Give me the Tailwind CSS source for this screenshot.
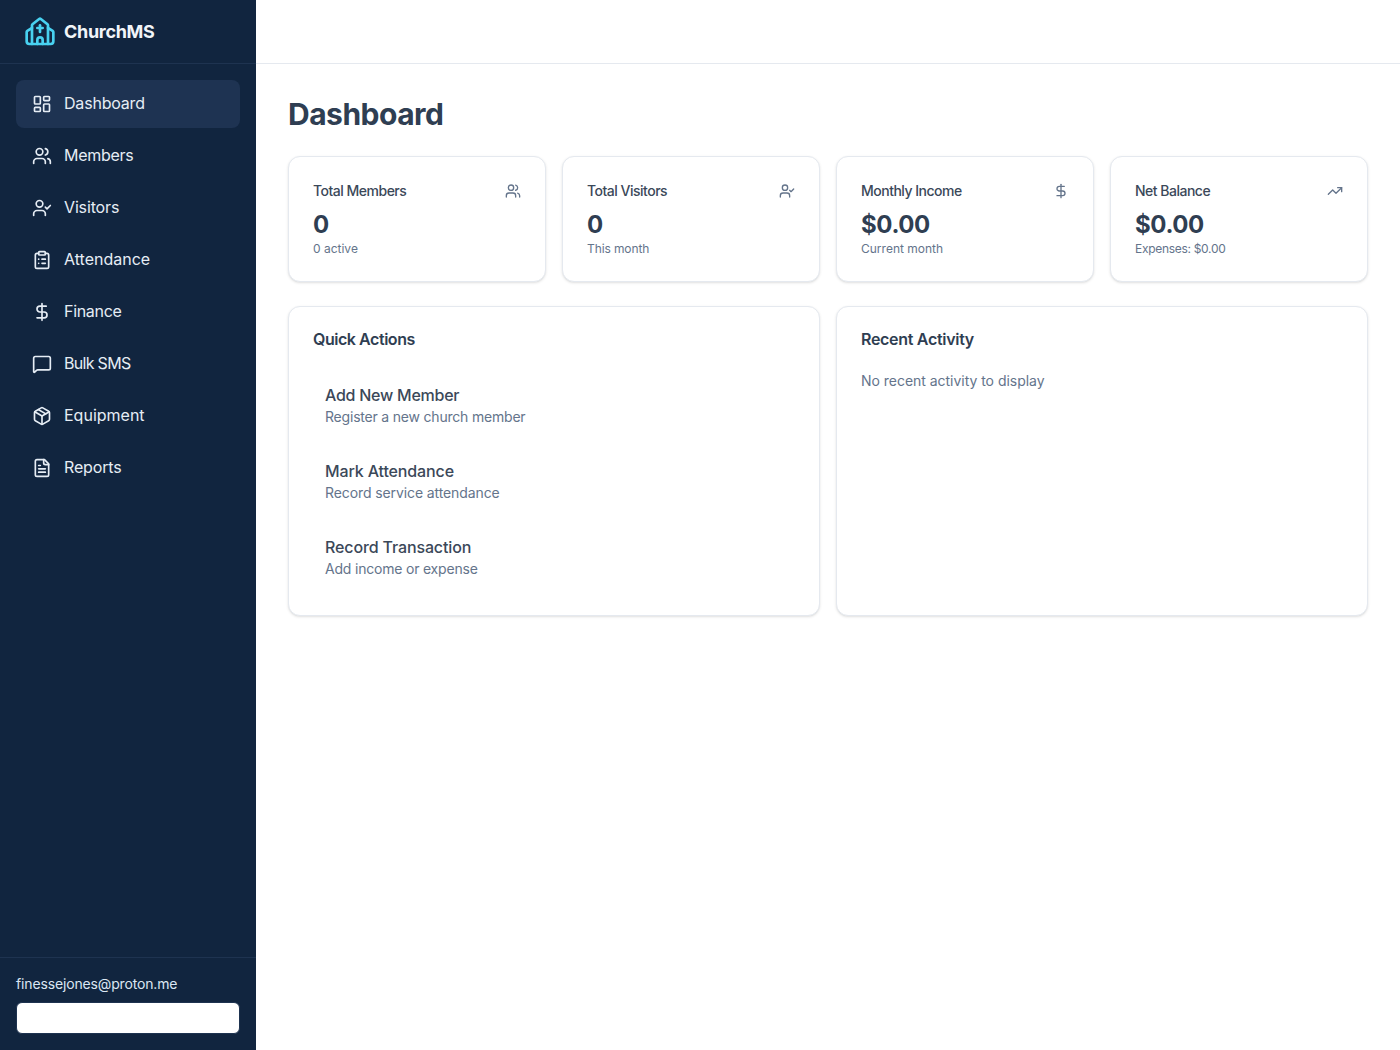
<!DOCTYPE html>
<html lang="en">
<head>
    <meta charset="UTF-8">
    <meta name="viewport" content="width=device-width, initial-scale=1.0">
    <title>ChurchMS Dashboard</title>
    <script src="https://cdn.jsdelivr.net/npm/@tailwindcss/browser@4"></script>
</head>
<body class="bg-white font-['Inter',sans-serif]">
    <div class="flex h-[1050px] overflow-hidden">

        <!-- Sidebar -->
        <aside class="w-64 shrink-0 bg-[#11253f] flex flex-col">
            <div class="h-16 flex items-center gap-2 px-6 border-b border-[#1e3350]">
                <svg class="w-8 h-8 text-[#48d1f0]" viewBox="0 0 24 24" fill="none" stroke="currentColor" stroke-width="2" stroke-linecap="round" stroke-linejoin="round"><path d="M10 9h4"/><path d="M12 7v5"/><path d="M14 21v-3a2 2 0 0 0-4 0v3"/><path d="m18 9 3.52 2.147a1 1 0 0 1 .48.854V19a2 2 0 0 1-2 2H4a2 2 0 0 1-2-2v-6.999a1 1 0 0 1 .48-.854L6 9"/><path d="M6 21V7a1 1 0 0 1 .376-.782l5-3.999a1 1 0 0 1 1.249.001l5 4A1 1 0 0 1 18 7v14"/></svg>
                <span class="text-[18px] font-bold text-[#f1f5f9] tracking-[-0.3px]">ChurchMS</span>
            </div>

            <nav class="flex-1 p-4 flex flex-col gap-1">
                <a class="h-12 flex items-center gap-3 px-4 rounded-lg bg-[#1e3352] text-[#e6edf5] text-[16px]">
                    <svg class="w-5 h-5" viewBox="0 0 24 24" fill="none" stroke="currentColor" stroke-width="2" stroke-linecap="round" stroke-linejoin="round"><rect width="7" height="9" x="3" y="3" rx="1"/><rect width="7" height="5" x="14" y="3" rx="1"/><rect width="7" height="9" x="14" y="12" rx="1"/><rect width="7" height="5" x="3" y="16" rx="1"/></svg>
                    <span class="pb-[2px] tracking-[-0.2px]">Dashboard</span>
                </a>
                <a class="h-12 flex items-center gap-3 px-4 rounded-lg text-[#e6edf5] text-[16px]">
                    <svg class="w-5 h-5" viewBox="0 0 24 24" fill="none" stroke="currentColor" stroke-width="2" stroke-linecap="round" stroke-linejoin="round"><path d="M16 21v-2a4 4 0 0 0-4-4H6a4 4 0 0 0-4 4v2"/><circle cx="9" cy="7" r="4"/><path d="M22 21v-2a4 4 0 0 0-3-3.87"/><path d="M16 3.13a4 4 0 0 1 0 7.75"/></svg>
                    <span class="pb-[2px] tracking-[-0.3px]">Members</span>
                </a>
                <a class="h-12 flex items-center gap-3 px-4 rounded-lg text-[#e6edf5] text-[16px]">
                    <svg class="w-5 h-5" viewBox="0 0 24 24" fill="none" stroke="currentColor" stroke-width="2" stroke-linecap="round" stroke-linejoin="round"><path d="M16 21v-2a4 4 0 0 0-4-4H6a4 4 0 0 0-4 4v2"/><circle cx="9" cy="7" r="4"/><polyline points="16 11 18 13 22 9"/></svg>
                    <span class="pb-[2px] tracking-[-0.15px]">Visitors</span>
                </a>
                <a class="h-12 flex items-center gap-3 px-4 rounded-lg text-[#e6edf5] text-[16px]">
                    <svg class="w-5 h-5" viewBox="0 0 24 24" fill="none" stroke="currentColor" stroke-width="2" stroke-linecap="round" stroke-linejoin="round"><rect width="8" height="4" x="8" y="2" rx="1"/><path d="M16 4h2a2 2 0 0 1 2 2v14a2 2 0 0 1-2 2H6a2 2 0 0 1-2-2V6a2 2 0 0 1 2-2h2"/><path d="M12 11h4"/><path d="M12 16h4"/><path d="M8 11h.01"/><path d="M8 16h.01"/></svg>
                    <span class="pb-[2px]">Attendance</span>
                </a>
                <a class="h-12 flex items-center gap-3 px-4 rounded-lg text-[#e6edf5] text-[16px]">
                    <svg class="w-5 h-5" viewBox="0 0 24 24" fill="none" stroke="currentColor" stroke-width="2" stroke-linecap="round" stroke-linejoin="round"><line x1="12" x2="12" y1="2" y2="22"/><path d="M17 5H9.5a3.5 3.5 0 0 0 0 7h5a3.5 3.5 0 0 1 0 7H6"/></svg>
                    <span class="pb-[2px] tracking-[-0.3px]">Finance</span>
                </a>
                <a class="h-12 flex items-center gap-3 px-4 rounded-lg text-[#e6edf5] text-[16px]">
                    <svg class="w-5 h-5" viewBox="0 0 24 24" fill="none" stroke="currentColor" stroke-width="2" stroke-linecap="round" stroke-linejoin="round"><path d="M22 17a2 2 0 0 1-2 2H6.828a2 2 0 0 0-1.414.586l-2.202 2.202A.71.71 0 0 1 2 21.286V5a2 2 0 0 1 2-2h16a2 2 0 0 1 2 2z"/></svg>
                    <span class="pb-[2px] tracking-[-0.7px]">Bulk SMS</span>
                </a>
                <a class="h-12 flex items-center gap-3 px-4 rounded-lg text-[#e6edf5] text-[16px]">
                    <svg class="w-5 h-5" viewBox="0 0 24 24" fill="none" stroke="currentColor" stroke-width="2" stroke-linecap="round" stroke-linejoin="round"><path d="m7.5 4.27 9 5.15"/><path d="M21 8a2 2 0 0 0-1-1.73l-7-4a2 2 0 0 0-2 0l-7 4A2 2 0 0 0 3 8v8a2 2 0 0 0 1 1.73l7 4a2 2 0 0 0 2 0l7-4A2 2 0 0 0 21 16Z"/><path d="m3.3 7 8.7 5 8.7-5"/><path d="M12 22V12"/></svg>
                    <span class="pb-[2px]">Equipment</span>
                </a>
                <a class="h-12 flex items-center gap-3 px-4 rounded-lg text-[#e6edf5] text-[16px]">
                    <svg class="w-5 h-5" viewBox="0 0 24 24" fill="none" stroke="currentColor" stroke-width="2" stroke-linecap="round" stroke-linejoin="round"><path d="M15 2H6a2 2 0 0 0-2 2v16a2 2 0 0 0 2 2h12a2 2 0 0 0 2-2V7Z"/><path d="M14 2v4a2 2 0 0 0 2 2h4"/><path d="M10 9H8"/><path d="M16 13H8"/><path d="M16 17H8"/></svg>
                    <span class="pb-[2px] tracking-[-0.15px]">Reports</span>
                </a>
            </nav>

            <div class="p-4 border-t border-[#1e3350]">
                <p class="text-[14px] leading-5 text-[#dbe7f3] tracking-[-0.15px] mb-2">finessejones@proton.me</p>
                <button class="block w-full h-8 rounded-md bg-white border border-[#1e3350]"></button>
            </div>
        </aside>

        <div class="flex-1 flex flex-col">
            <header class="h-16 shrink-0 bg-white border-b border-[#e5e9ef]"></header>

            <main class="p-8">
                <h1 class="text-[30px] leading-9 font-bold text-[#2f3e52] tracking-[-0.5px] mb-6">Dashboard</h1>

                <!-- Stat cards -->
                <div class="grid grid-cols-4 gap-4 mb-6">
                    <div class="h-[126px] bg-white border border-[#e5e9ef] rounded-xl shadow-sm p-6">
                        <div class="flex items-center justify-between h-5 mb-2">
                            <span class="pb-[2px] text-[14px] font-medium text-[#3b4859] tracking-[-0.5px]">Total Members</span>
                            <svg class="w-4 h-4 text-[#64748b]" viewBox="0 0 24 24" fill="none" stroke="currentColor" stroke-width="2" stroke-linecap="round" stroke-linejoin="round"><path d="M16 21v-2a4 4 0 0 0-4-4H6a4 4 0 0 0-4 4v2"/><circle cx="9" cy="7" r="4"/><path d="M22 21v-2a4 4 0 0 0-3-3.87"/><path d="M16 3.13a4 4 0 0 1 0 7.75"/></svg>
                        </div>
                        <div class="text-[24px] leading-8 font-bold text-[#2f3e52] tracking-[-0.4px]">0</div>
                        <div class="text-[12px] leading-4 text-[#64748b]">0 active</div>
                    </div>
                    <div class="h-[126px] bg-white border border-[#e5e9ef] rounded-xl shadow-sm p-6">
                        <div class="flex items-center justify-between h-5 mb-2">
                            <span class="pb-[2px] text-[14px] font-medium text-[#3b4859] tracking-[-0.5px]">Total Visitors</span>
                            <svg class="w-4 h-4 text-[#64748b]" viewBox="0 0 24 24" fill="none" stroke="currentColor" stroke-width="2" stroke-linecap="round" stroke-linejoin="round"><path d="M16 21v-2a4 4 0 0 0-4-4H6a4 4 0 0 0-4 4v2"/><circle cx="9" cy="7" r="4"/><polyline points="16 11 18 13 22 9"/></svg>
                        </div>
                        <div class="text-[24px] leading-8 font-bold text-[#2f3e52] tracking-[-0.4px]">0</div>
                        <div class="text-[12px] leading-4 text-[#64748b] tracking-[-0.1px]">This month</div>
                    </div>
                    <div class="h-[126px] bg-white border border-[#e5e9ef] rounded-xl shadow-sm p-6">
                        <div class="flex items-center justify-between h-5 mb-2">
                            <span class="pb-[2px] text-[14px] font-medium text-[#3b4859] tracking-[-0.5px]">Monthly Income</span>
                            <svg class="w-4 h-4 text-[#64748b]" viewBox="0 0 24 24" fill="none" stroke="currentColor" stroke-width="2" stroke-linecap="round" stroke-linejoin="round"><line x1="12" x2="12" y1="2" y2="22"/><path d="M17 5H9.5a3.5 3.5 0 0 0 0 7h5a3.5 3.5 0 0 1 0 7H6"/></svg>
                        </div>
                        <div class="text-[24px] leading-8 font-bold text-[#2f3e52] tracking-[-0.4px]">$0.00</div>
                        <div class="text-[12px] leading-4 text-[#64748b]">Current month</div>
                    </div>
                    <div class="h-[126px] bg-white border border-[#e5e9ef] rounded-xl shadow-sm p-6">
                        <div class="flex items-center justify-between h-5 mb-2">
                            <span class="pb-[2px] text-[14px] font-medium text-[#3b4859] tracking-[-0.5px]">Net Balance</span>
                            <svg class="w-4 h-4 text-[#64748b]" viewBox="0 0 24 24" fill="none" stroke="currentColor" stroke-width="2" stroke-linecap="round" stroke-linejoin="round"><polyline points="22 7 13.5 15.5 8.5 10.5 2 17"/><polyline points="16 7 22 7 22 13"/></svg>
                        </div>
                        <div class="text-[24px] leading-8 font-bold text-[#2f3e52] tracking-[-0.4px]">$0.00</div>
                        <div class="text-[12px] leading-4 text-[#64748b] tracking-[-0.3px]">Expenses: $0.00</div>
                    </div>
                </div>

                <!-- Lower panels -->
                <div class="grid grid-cols-2 gap-4">
                    <div class="h-[310px] bg-white border border-[#e5e9ef] rounded-xl shadow-sm p-6">
                        <h2 class="text-[16px] leading-4 font-semibold text-[#2f3e52] tracking-[-0.45px] mb-6">Quick Actions</h2>
                        <div class="flex flex-col gap-2">
                            <a class="block h-[68px] px-3 py-3">
                                <div class="text-[16px] leading-6 font-medium text-[#3b4859] tracking-[-0.25px]">Add New Member</div>
                                <div class="text-[14px] leading-5 text-[#64748b] tracking-[-0.2px]">Register a new church member</div>
                            </a>
                            <a class="block h-[68px] px-3 py-3">
                                <div class="text-[16px] leading-6 font-medium text-[#3b4859] tracking-[-0.13px]">Mark Attendance</div>
                                <div class="text-[14px] leading-5 text-[#64748b] tracking-[-0.1px]">Record service attendance</div>
                            </a>
                            <a class="block h-[68px] px-3 py-3">
                                <div class="text-[16px] leading-6 font-medium text-[#3b4859] tracking-[-0.13px]">Record Transaction</div>
                                <div class="text-[14px] leading-5 text-[#64748b] tracking-[-0.2px]">Add income or expense</div>
                            </a>
                        </div>
                    </div>
                    <div class="h-[310px] bg-white border border-[#e5e9ef] rounded-xl shadow-sm p-6">
                        <h2 class="text-[16px] leading-4 font-semibold text-[#2f3e52] tracking-[-0.3px] mb-6">Recent Activity</h2>
                        <p class="text-[14px] leading-5 text-[#64748b] tracking-[-0.03px]">No recent activity to display</p>
                    </div>
                </div>
            </main>
        </div>
    </div>
</body>
</html>
